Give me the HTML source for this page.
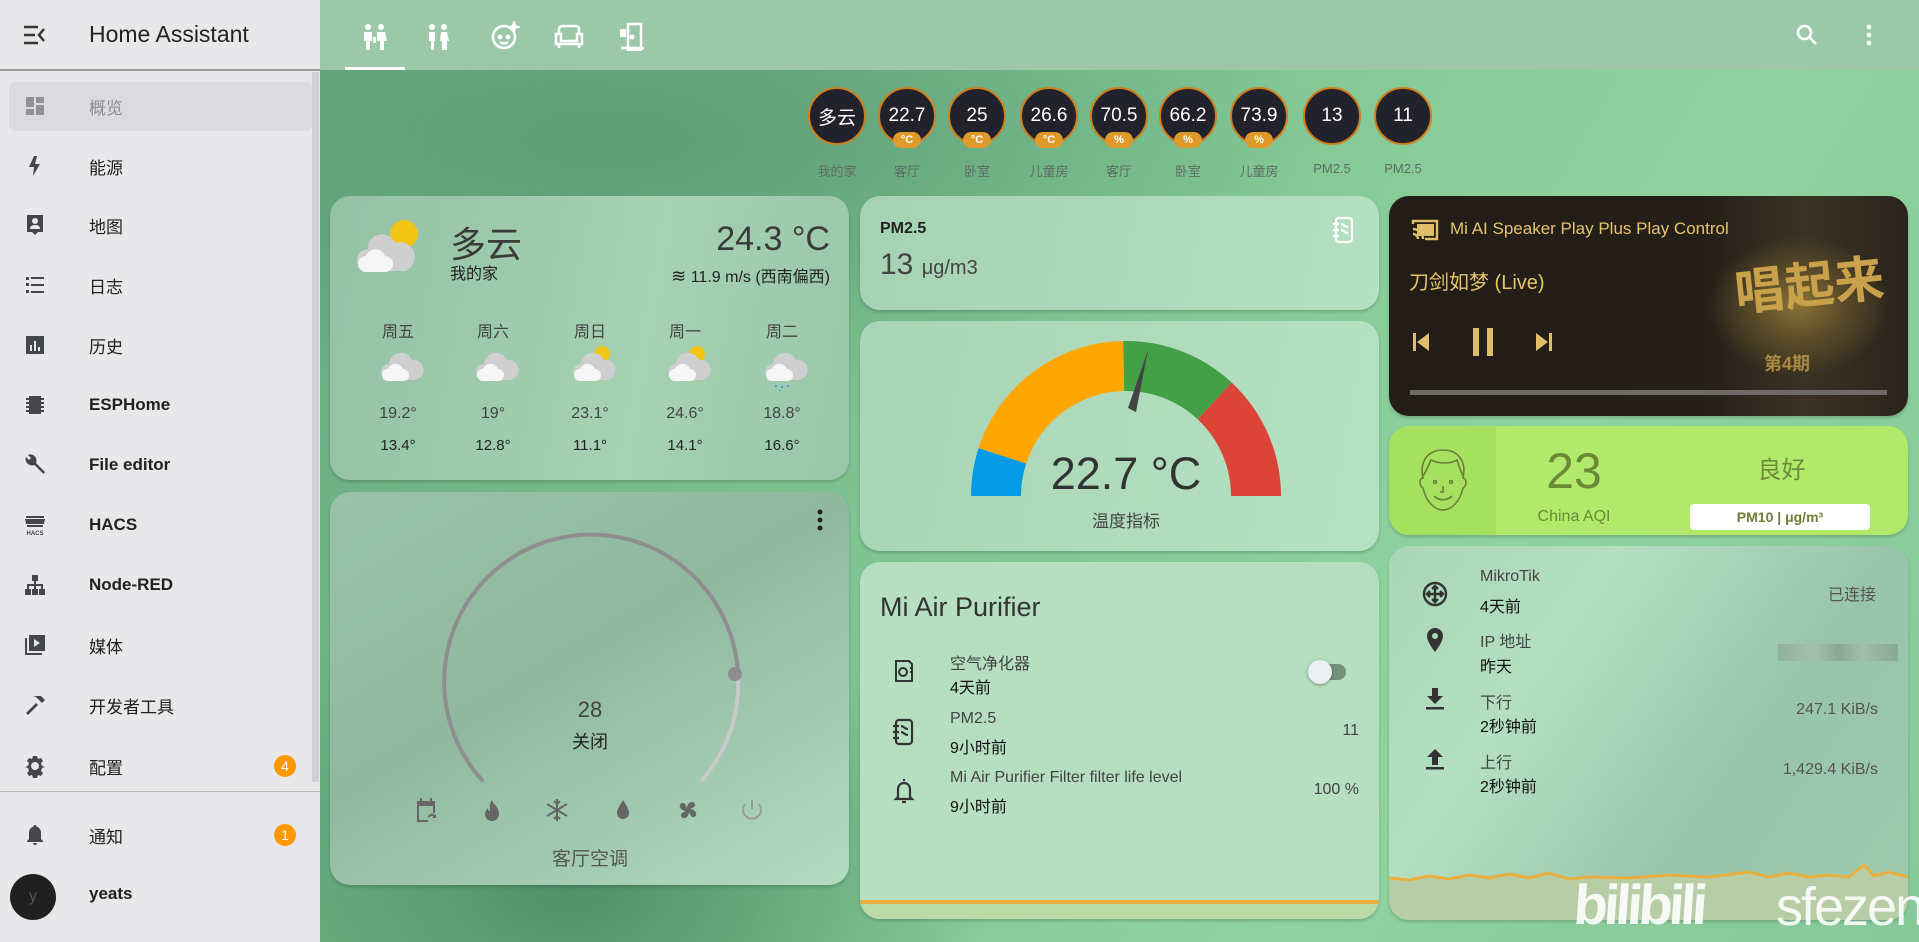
<!DOCTYPE html>
<html><head><meta charset="utf-8">
<style>
*{margin:0;padding:0;box-sizing:border-box}
body{width:1919px;height:942px;overflow:hidden;position:relative;font-family:"Liberation Sans","Noto Sans CJK SC",sans-serif;background:#7cbf8f}
.a{position:absolute}
#side{left:0;top:0;width:320px;height:942px;background:#e8e8eb}
.mi{position:absolute;left:0;width:312px;height:60px;display:flex;align-items:center;font-size:17px;color:#212121;font-weight:400}
.mi.en{font-weight:bold}
.mi svg{position:absolute;left:23px;width:24px;height:24px;fill:#44464d}
.mi span{position:absolute;left:89px}
#main{left:320px;top:0;width:1599px;height:942px;background:
radial-gradient(ellipse 420px 300px at 250px 880px,#4f9068 0%,rgba(79,144,104,0) 100%),
radial-gradient(ellipse 700px 260px at 300px 140px,#5e9e76 0%,rgba(94,158,118,0) 100%),
linear-gradient(120deg,#66a87e 0%,#7fc492 40%,#8fd3a0 70%,#86c898 100%);overflow:hidden}
#hdr{left:320px;top:0;width:1599px;height:70px;background:#9cc8aa}
.card{position:absolute;border-radius:20px;box-shadow:0 2px 3px rgba(0,0,0,.18);overflow:hidden}
.bd{position:absolute;width:58px;height:58px;border-radius:50%;background:#22222c;border:2px solid #d27d1c;color:#fff;font-size:19px;display:flex;align-items:center;justify-content:center}
.un{position:absolute;width:28px;height:16px;border-radius:8px;background:#e09a2b;color:#fff;font-size:11px;font-weight:bold;text-align:center;line-height:16px}
.bl{position:absolute;width:80px;text-align:center;font-size:13px;color:#5c6d62}
.t{position:absolute;white-space:nowrap}
.c{text-align:center}
</style></head><body>
<div id="main" class="a"></div>
<div id="hdr" class="a"></div>

<div id="side" class="a">
 <div class="a" style="left:0;top:69px;width:320px;height:2px;background:#9a9a9a"></div>
 <svg class="a" style="left:22px;top:24px" width="26" height="22" viewBox="0 0 26 22"><path d="M2 3h14M2 11h11M2 19h14" stroke="#333" stroke-width="2.4"/><path d="M22 5l-5 6 5 6" stroke="#333" stroke-width="2.4" fill="none"/></svg>
 <div class="t" style="left:89px;top:21px;font-size:23px;color:#222">Home Assistant</div>
 <div class="a" style="left:9px;top:82px;width:303px;height:49px;background:#dadadf;border-radius:6px"></div>
 <div class="a" style="left:312px;top:72px;width:7px;height:710px;background:#d0d0d4"></div>
 <div class="mi" style="top:76px;color:#8d8d90"><svg viewBox="0 0 24 24" style="fill:#909096"><path d="M3 3h8v10H3zM13 3h8v6h-8zM13 11h8v10h-8zM3 15h8v6H3z"/></svg><span>概览</span></div>
 <div class="mi" style="top:136px"><svg viewBox="0 0 24 24"><path d="M11 2L6 13h5l-1 9 7-12h-5l2-8z"/></svg><span>能源</span></div>
 <div class="mi" style="top:195px"><svg viewBox="0 0 24 24"><path d="M4 2h16v17h-5l-3 3-3-3H4zM12 5a3 3 0 100 6 3 3 0 000-6zM7 16h10c0-3-2-4-5-4s-5 1-5 4z"/></svg><span>地图</span></div>
 <div class="mi" style="top:255px"><svg viewBox="0 0 24 24"><path d="M3 4h3v3H3zM8 4h13v2H8zM3 10h3v3H3zM8 11h13v2H8zM3 17h3v3H3zM8 18h13v2H8z"/></svg><span>日志</span></div>
 <div class="mi" style="top:315px"><svg viewBox="0 0 24 24"><path d="M3 3h18v18H3zM7 12v6h2v-6zM11 8v10h2V8zM15 14v4h2v-4z" fill-rule="evenodd"/></svg><span>历史</span></div>
 <div class="mi en" style="top:375px"><svg viewBox="0 0 24 24"><path d="M6 3h12v18H6zM3 5h3v2H3zM3 9h3v2H3zM3 13h3v2H3zM3 17h3v2H3zM18 5h3v2h-3zM18 9h3v2h-3zM18 13h3v2h-3zM18 17h3v2h-3z"/></svg><span>ESPHome</span></div>
 <div class="mi en" style="top:435px"><svg viewBox="0 0 24 24"><path d="M22 19l-9-9c1-2 .5-5-1.5-7S6.5 1 5 2l3 3-2 2-3-3c-1 1.5-.5 4.5 1.5 6.5s5 2.5 7 1.5l9 9z"/></svg><span>File editor</span></div>
 <div class="mi en" style="top:495px"><svg viewBox="0 0 24 24"><path d="M3 3h18v2H3zM2 6h20l-1 5H3zM4 12h16v2H4z"/><text x="12" y="22" font-size="6" text-anchor="middle" fill="#44464d" font-weight="bold">HACS</text></svg><span>HACS</span></div>
 <div class="mi en" style="top:555px"><svg viewBox="0 0 24 24"><path d="M9 2h6v6h-2v3h7v5h2v6h-6v-6h2v-3h-5v3h2v6H9v-6h2v-3H6v3h2v6H2v-6h2v-5h7V8H9z"/></svg><span>Node-RED</span></div>
 <div class="mi" style="top:615px"><svg viewBox="0 0 24 24"><path d="M2 5h2v15h15v2H2zM6 2h16v16H6zM11 6v8l6-4z" fill-rule="evenodd"/></svg><span>媒体</span></div>
 <div class="mi" style="top:675px"><svg viewBox="0 0 24 24"><path d="M3 20l10-10 2 2L5 22zM10 3l8 0 4 4-3 3-6-6z"/></svg><span>开发者工具</span></div>
 <div class="mi" style="top:736px"><svg viewBox="0 0 24 24"><path d="M12 8a4 4 0 100 8 4 4 0 000-8zM10 2h4l1 3 3-1 2 3-2 2 1 3 3 1v0l-3 1-1 3 2 2-2 3-3-1-1 3h-4l-1-3-3 1-2-3 2-2-1-3-3-1 3-1 1-3-2-2 2-3 3 1z" fill-rule="evenodd"/></svg><span>配置</span></div>
 <div class="a" style="left:274px;top:755px;width:22px;height:22px;border-radius:50%;background:#ff9800;color:#fff;font-size:14px;text-align:center;line-height:22px">4</div>
 <div class="a" style="left:0;top:791px;width:320px;height:1px;background:#bbb"></div>
 <div class="mi" style="top:805px"><svg viewBox="0 0 24 24"><path d="M12 2c1 0 1.5.7 1.5 1.5C16.5 4.5 18 7 18 10v6l2 2v1H4v-1l2-2v-6c0-3 1.5-5.5 4.5-6.5C10.5 2.7 11 2 12 2zM10 20h4a2 2 0 01-4 0z"/></svg><span>通知</span></div>
 <div class="a" style="left:274px;top:824px;width:22px;height:22px;border-radius:50%;background:#ff9800;color:#fff;font-size:14px;text-align:center;line-height:22px">1</div>
 <div class="a" style="left:10px;top:874px;width:46px;height:46px;border-radius:50%;background:#202020;color:#555;font-size:16px;text-align:center;line-height:46px">y</div>
 <div class="t" style="left:89px;top:884px;font-size:17px;font-weight:bold;color:#212121">yeats</div>
</div>

<svg class="a" style="left:360px;top:23px" width="30" height="28" viewBox="0 0 30 28" fill="#fff"><circle cx="8" cy="4" r="3"/><circle cx="21" cy="4" r="3"/><path d="M4 9h8v9h-2v9H6v-9H4zM17 9h8l2 9h-3v9h-4v-9h-3zM13 14h3v6h-3z"/></svg>
<svg class="a" style="left:426px;top:23px" width="24" height="28" viewBox="0 0 24 28" fill="#fff"><circle cx="6" cy="4" r="3"/><circle cx="18" cy="4" r="3"/><path d="M3 9h6v9H8v9H5v-9H3zM15 9h6l2 9h-2v9h-5v-9h-2z"/></svg>
<svg class="a" style="left:490px;top:21px" width="30" height="30" viewBox="0 0 30 30" fill="none" stroke="#fff" stroke-width="2.5"><circle cx="14" cy="16" r="11"/><circle cx="10" cy="16" r="1.2" fill="#fff"/><circle cx="18" cy="16" r="1.2" fill="#fff"/><path d="M10 21c2 2 6 2 8 0M24 2l1 3 3 1-3 1-1 3-1-3-3-1 3-1z"/></svg>
<svg class="a" style="left:553px;top:24px" width="32" height="26" viewBox="0 0 32 26" fill="none" stroke="#fff" stroke-width="2.5"><path d="M6 10V5c0-2 2-3 4-3h12c2 0 4 1 4 3v5M3 10h5v7h16v-7h5v10H3zM6 20v4M26 20v4"/></svg>
<svg class="a" style="left:618px;top:21px" width="26" height="30" viewBox="0 0 26 30" fill="none" stroke="#fff" stroke-width="2.5"><path d="M10 3h13v26H10zM3 27h24"/><rect x="2" y="8" width="6" height="8" fill="#fff" stroke="none"/><circle cx="14" cy="16" r="1.3" fill="#fff"/></svg>
<div class="a" style="left:345px;top:67px;width:60px;height:3px;background:#fff"></div>
<svg class="a" style="left:1795px;top:23px" width="24" height="24" viewBox="0 0 24 24" fill="none" stroke="#fff" stroke-width="2.6"><circle cx="9.5" cy="9.5" r="6.5"/><path d="M14 14l7 7"/></svg>
<svg class="a" style="left:1862px;top:23px" width="14" height="24" viewBox="0 0 14 24" fill="#fff"><circle cx="7" cy="4" r="2.4"/><circle cx="7" cy="12" r="2.4"/><circle cx="7" cy="20" r="2.4"/></svg>

<div class="bd" style="left:808px;top:87px">多云</div>
<div class="bd" style="left:878px;top:87px">22.7</div><div class="un" style="left:893px;top:132px">°C</div>
<div class="bd" style="left:948px;top:87px">25</div><div class="un" style="left:963px;top:132px">°C</div>
<div class="bd" style="left:1020px;top:87px">26.6</div><div class="un" style="left:1035px;top:132px">°C</div>
<div class="bd" style="left:1090px;top:87px">70.5</div><div class="un" style="left:1105px;top:132px">%</div>
<div class="bd" style="left:1159px;top:87px">66.2</div><div class="un" style="left:1174px;top:132px">%</div>
<div class="bd" style="left:1230px;top:87px">73.9</div><div class="un" style="left:1245px;top:132px">%</div>
<div class="bd" style="left:1303px;top:87px">13</div>
<div class="bd" style="left:1374px;top:87px">11</div>
<div class="bl" style="left:797px;top:161px">我的家</div>
<div class="bl" style="left:867px;top:161px">客厅</div>
<div class="bl" style="left:937px;top:161px">卧室</div>
<div class="bl" style="left:1009px;top:161px">儿童房</div>
<div class="bl" style="left:1079px;top:161px">客厅</div>
<div class="bl" style="left:1148px;top:161px">卧室</div>
<div class="bl" style="left:1219px;top:161px">儿童房</div>
<div class="bl" style="left:1292px;top:161px">PM2.5</div>
<div class="bl" style="left:1363px;top:161px">PM2.5</div>

<div class="card" style="left:330px;top:196px;width:519px;height:284px;background:linear-gradient(100deg,#93c1a4,#a6d1b3 60%,#99c6a9)">
 <svg class="a" style="left:26px;top:20px" width="70" height="60" viewBox="0 0 70 60"><circle cx="48" cy="18" r="14" fill="#f2c413"/><path d="M12 55a11 11 0 010-22 14 14 0 0127-6 12 12 0 0110 28z" fill="#cfcfcf"/><path d="M10 56a8 8 0 010-16 10 10 0 0119 0 8 8 0 010 16z" fill="#f6f6f6"/></svg>
 <div class="t" style="left:120px;top:20px;font-size:36px;color:#3a3a3a">多云</div>
 <div class="t" style="left:120px;top:64px;font-size:16px;color:#222">我的家</div>
 <div class="t" style="right:19px;top:24px;font-size:34px;color:#3a3a3a">24.3 °C</div>
 <div class="t" style="right:19px;top:67px;font-size:16px;color:#222"><span style="font-size:18px">≋</span> 11.9 m/s (西南偏西)</div>
 <div class="t c" style="left:38px;width:60px;top:122px;font-size:16px;color:#444">周五</div>
 <div class="t c" style="left:133px;width:60px;top:122px;font-size:16px;color:#444">周六</div>
 <div class="t c" style="left:230px;width:60px;top:122px;font-size:16px;color:#444">周日</div>
 <div class="t c" style="left:325px;width:60px;top:122px;font-size:16px;color:#444">周一</div>
 <div class="t c" style="left:422px;width:60px;top:122px;font-size:16px;color:#444">周二</div>
 <svg class="a" style="left:50px;top:150px" width="44" height="40" viewBox="0 0 44 40"><path d="M9 34a8 8 0 010-16 12 12 0 0123-4 10 10 0 013 20z" fill="#cfcfcf"/><path d="M8 35a6 6 0 010-12 8 8 0 0115 0 6 6 0 010 12z" fill="#f6f6f6"/></svg>
 <svg class="a" style="left:145px;top:150px" width="44" height="40" viewBox="0 0 44 40"><path d="M9 34a8 8 0 010-16 12 12 0 0123-4 10 10 0 013 20z" fill="#cfcfcf"/><path d="M8 35a6 6 0 010-12 8 8 0 0115 0 6 6 0 010 12z" fill="#f6f6f6"/></svg>
 <svg class="a" style="left:242px;top:146px" width="44" height="44" viewBox="0 0 44 44"><circle cx="30" cy="12" r="8" fill="#f2c413"/><path d="M9 38a8 8 0 010-16 12 12 0 0123-4 10 10 0 013 20z" fill="#cfcfcf"/><path d="M8 39a6 6 0 010-12 8 8 0 0115 0 6 6 0 010 12z" fill="#f6f6f6"/></svg>
 <svg class="a" style="left:337px;top:146px" width="44" height="44" viewBox="0 0 44 44"><circle cx="30" cy="12" r="8" fill="#f2c413"/><path d="M9 38a8 8 0 010-16 12 12 0 0123-4 10 10 0 013 20z" fill="#cfcfcf"/><path d="M8 39a6 6 0 010-12 8 8 0 0115 0 6 6 0 010 12z" fill="#f6f6f6"/></svg>
 <svg class="a" style="left:434px;top:150px" width="44" height="46" viewBox="0 0 44 46"><path d="M9 34a8 8 0 010-16 12 12 0 0123-4 10 10 0 013 20z" fill="#cfcfcf"/><path d="M8 35a6 6 0 010-12 8 8 0 0115 0 6 6 0 010 12z" fill="#f6f6f6"/><path d="M12 39v2M18 40v2M24 39v2M16 44v1" stroke="#3aa0e8" stroke-width="2"/></svg>
 <div class="t c" style="left:38px;width:60px;top:209px;font-size:16px;color:#444">19.2°</div>
 <div class="t c" style="left:133px;width:60px;top:209px;font-size:16px;color:#444">19°</div>
 <div class="t c" style="left:230px;width:60px;top:209px;font-size:16px;color:#444">23.1°</div>
 <div class="t c" style="left:325px;width:60px;top:209px;font-size:16px;color:#444">24.6°</div>
 <div class="t c" style="left:422px;width:60px;top:209px;font-size:16px;color:#444">18.8°</div>
 <div class="t c" style="left:38px;width:60px;top:241px;font-size:15px;color:#222">13.4°</div>
 <div class="t c" style="left:133px;width:60px;top:241px;font-size:15px;color:#222">12.8°</div>
 <div class="t c" style="left:230px;width:60px;top:241px;font-size:15px;color:#222">11.1°</div>
 <div class="t c" style="left:325px;width:60px;top:241px;font-size:15px;color:#222">14.1°</div>
 <div class="t c" style="left:422px;width:60px;top:241px;font-size:15px;color:#222">16.6°</div>
</div>

<div class="card" style="left:330px;top:492px;width:519px;height:393px;background:linear-gradient(150deg,#98c2a8 0%,#90b9a0 45%,#b2dcc0 100%)">
 <svg class="a" style="left:0;top:0" width="519" height="393" viewBox="0 0 519 393">
  <path d="M152 288 A147 147 0 1 1 408 182" fill="none" stroke="#8e8e8e" stroke-width="4" stroke-linecap="round"/>
  <path d="M408 182 A147 147 0 0 1 372 288" fill="none" stroke="#c9c9c9" stroke-width="4" stroke-linecap="round"/>
  <circle cx="405" cy="182" r="7" fill="#8e8e8e"/>
  <circle cx="490" cy="20" r="2.5" fill="#222"/><circle cx="490" cy="28" r="2.5" fill="#222"/><circle cx="490" cy="36" r="2.5" fill="#222"/>
 </svg>
 <div class="t c" style="left:210px;width:100px;top:205px;font-size:22px;color:#444">28</div>
 <div class="t c" style="left:210px;width:100px;top:236px;font-size:18px;color:#222">关闭</div>
 <svg class="a" style="left:84px;top:305px" width="360" height="28" viewBox="0 0 360 28" fill="#666">
  <path d="M3 4h18v12h-2V9H5v14h9v2H3zM6 1h2v4H6zM16 1h2v4h-2z"/><path d="M14 20a4 4 0 017-2l1-1v4h-4l1.5-1.5a2.5 2.5 0 00-4 1z"/>
  <path d="M78 3c1 4 7 7 7 14a7 7 0 01-14 0c0-3 2-5 3-6 0 2 1 3 2 3 0-5-1-7 2-11z"/>
  <path d="M143 2v22M133 7l20 12M133 19l20-12M140 4l3 3 3-3M140 22l3-3 3 3" stroke="#666" stroke-width="2" fill="none"/>
  <path d="M209 3c-3 5-6 9-6 13a6 6 0 0012 0c0-4-3-8-6-13z"/>
  <path d="M273 11c0-5 6-9 8-4 1 3-3 4-5 5 5 0 9 6 4 8-3 1-4-3-5-5 0 5-6 9-8 4-1-3 3-4 5-5-5 0-9-6-4-8 3-1 4 3 5 5z"/>
  <path d="M338 3v9M331 7a9 9 0 1014 0" stroke="#9a9a9a" stroke-width="2" fill="none"/>
 </svg>
 <div class="t c" style="left:160px;width:200px;top:352px;font-size:19px;color:#555">客厅空调</div>
</div>

<div class="card" style="left:860px;top:196px;width:519px;height:114px;background:linear-gradient(100deg,#a5d2b3,#b5e0c2)">
 <div class="t" style="left:20px;top:24px;font-size:16px;font-weight:bold;color:#222">PM2.5</div>
 <div class="t" style="left:20px;top:52px;font-size:30px;color:#444">13 <span style="font-size:20px">μg/m3</span></div>
 <svg class="a" style="left:472px;top:20px" width="22" height="28" viewBox="0 0 22 28" fill="none" stroke="#fff" stroke-width="2.2"><rect x="4" y="2" width="16" height="24" rx="3"/><path d="M1 8h6M1 14h6M1 20h6M9 8c3 0 3 3 7 3M9 14c3 0 3 3 7 3"/></svg>
</div>

<div class="card" style="left:860px;top:321px;width:519px;height:230px;background:linear-gradient(100deg,#a8d5b5,#b6e1c2)">
 <svg class="a" style="left:0;top:0" width="519" height="230" viewBox="0 0 519 230">
  <g transform="translate(266,175)">
   <path d="M-155 0 A155 155 0 0 1 -147.4 -47.9 L-99.9 -32.4 A105 105 0 0 0 -105 0Z" fill="#039be5"/>
   <path d="M-147.4 -47.9 A155 155 0 0 1 -2.7 -155 L-1.8 -105 A105 105 0 0 0 -99.9 -32.4Z" fill="#ffa600"/>
   <path d="M-2.7 -155 A155 155 0 0 1 105.7 -113.4 L71.6 -76.8 A105 105 0 0 0 -1.8 -105Z" fill="#43a047"/>
   <path d="M105.7 -113.4 A155 155 0 0 1 155 0 L105 0 A105 105 0 0 0 71.6 -76.8Z" fill="#db4437"/>
   <path d="M22 -146 L10 -84 L2 -88 Z" fill="#444"/>
  </g>
 </svg>
 <div class="t c" style="left:166px;width:200px;top:127px;font-size:45px;color:#333">22.7 °C</div>
 <div class="t c" style="left:166px;width:200px;top:186px;font-size:17px;color:#444">温度指标</div>
</div>

<div class="card" style="left:860px;top:562px;width:519px;height:357px;background:#b5dfc0">
 <div class="t" style="left:20px;top:30px;font-size:27px;color:#333">Mi Air Purifier</div>
 <svg class="a" style="left:32px;top:96px" width="24" height="26" viewBox="0 0 24 26" fill="none" stroke="#333" stroke-width="2"><path d="M4 3h13l3 3v17H4z"/><circle cx="11" cy="14" r="4"/><path d="M18 10h3M18 14h3"/></svg>
 <div class="t" style="left:90px;top:88px;font-size:16px;color:#444">空气净化器</div>
 <div class="t" style="left:90px;top:112px;font-size:16px;color:#111">4天前</div>
 <div class="a" style="left:452px;top:102px;width:34px;height:16px;border-radius:8px;background:#72907a"></div>
 <div class="a" style="left:448px;top:98px;width:24px;height:24px;border-radius:50%;background:#eceef0;box-shadow:0 1px 3px rgba(0,0,0,.35)"></div>
 <svg class="a" style="left:32px;top:156px" width="22" height="28" viewBox="0 0 22 28" fill="none" stroke="#333" stroke-width="2.2"><rect x="4" y="2" width="16" height="24" rx="3"/><path d="M1 8h6M1 14h6M1 20h6M9 8c3 0 3 3 7 3M9 14c3 0 3 3 7 3"/></svg>
 <div class="t" style="left:90px;top:148px;font-size:16px;color:#444">PM2.5</div>
 <div class="t" style="left:90px;top:172px;font-size:16px;color:#111">9小时前</div>
 <div class="t" style="right:20px;top:160px;font-size:16px;color:#444">11</div>
 <svg class="a" style="left:32px;top:215px" width="24" height="28" viewBox="0 0 24 28" fill="none" stroke="#333" stroke-width="2.2"><path d="M12 2v2M6 20V12a6 6 0 0112 0v8l2 2H4zM10 25h4"/></svg>
 <div class="t" style="left:90px;top:207px;font-size:16px;color:#444">Mi Air Purifier Filter filter life level</div>
 <div class="t" style="left:90px;top:231px;font-size:16px;color:#111">9小时前</div>
 <div class="t" style="right:20px;top:219px;font-size:16px;color:#444">100 %</div>
 <div class="a" style="left:0;top:338px;width:519px;height:4px;background:#e8b040"></div>
 <div class="a" style="left:0;top:342px;width:519px;height:15px;background:#bcdaa8"></div>
</div>

<div class="card" style="left:1389px;top:196px;width:519px;height:220px;background:linear-gradient(90deg,#221d17 0%,#241f18 60%,#3a3224 80%,#2a241b 100%)">
 <div class="a" style="left:300px;top:20px;width:210px;height:180px;background:radial-gradient(ellipse 90px 70px at 110px 90px,#8a7236 0%,#5a4b28 50%,rgba(40,34,24,0) 100%)"></div>
 <div class="t" style="left:345px;top:50px;font-size:50px;font-weight:bold;color:#c9a14a;transform:rotate(-6deg)">唱起来</div>
 <div class="t" style="left:375px;top:154px;font-size:18px;font-weight:bold;color:#a88a40">第4期</div>
 <svg class="a" style="left:22px;top:22px" width="28" height="24" viewBox="0 0 28 24" fill="none" stroke="#e0bd68" stroke-width="2.4"><path d="M2 6V3h24v18H14"/><path d="M2 11a10 10 0 0110 10M2 16a5 5 0 015 5"/><rect x="6" y="6" width="17" height="12" fill="#e0bd68" stroke="none"/></svg>
 <div class="t" style="left:61px;top:23px;font-size:17px;color:#e6c46c">Mi AI Speaker Play Plus Play Control</div>
 <div class="t" style="left:20px;top:70px;font-size:20px;color:#e6c46c">刀剑如梦 (Live)</div>
 <svg class="a" style="left:24px;top:130px" width="150" height="32" viewBox="0 0 150 32" fill="#e0bd68"><path d="M0 7h3v18H0zM16 7v18L4 16z"/><path d="M60 2h6v28h-6zM74 2h6v28h-6z"/><path d="M123 7v18l12-9zM136 7h3v18h-3z"/></svg>
 <div class="a" style="left:21px;top:194px;width:477px;height:5px;background:#6e6a66"></div>
</div>

<div class="card" style="left:1389px;top:426px;width:519px;height:109px;background:#b1ea6a">
 <div class="a" style="left:0;top:0;width:107px;height:109px;background:#a6e05f"></div>
 <svg class="a" style="left:26px;top:20px" width="56" height="70" viewBox="0 0 56 70" fill="none" stroke="#6a7d3a" stroke-width="1.6"><path d="M8 32C4 14 14 4 28 4s24 10 20 28c4 0 4 8 0 10-3 14-12 22-20 22S11 56 8 42c-4-2-4-10 0-10z"/><path d="M8 30c4-6 6-12 8-16 8 4 20 4 26 0 2 6 4 12 6 16"/><circle cx="20" cy="36" r="1.5"/><circle cx="36" cy="36" r="1.5"/><path d="M28 40v6h-3M19 50c5 5 13 5 18 0"/></svg>
 <div class="t c" style="left:115px;width:140px;top:16px;font-size:50px;color:#6a8a33">23</div>
 <div class="t c" style="left:115px;width:140px;top:82px;font-size:16px;color:#6a8a33">China AQI</div>
 <div class="t c" style="left:300px;width:185px;top:24px;font-size:24px;color:#6d8a3a">良好</div>
 <div class="a" style="left:301px;top:78px;width:180px;height:26px;background:#fff;border-radius:4px;text-align:center;line-height:26px;font-size:14px;font-weight:bold;color:#6d7d36">PM10 | μg/m³</div>
</div>

<div class="card" style="left:1389px;top:546px;width:519px;height:374px;background:linear-gradient(125deg,#a9d6b6 0%,#b4dfc1 30%,#98c4ab 65%,#9dc9ad 100%)">
 <svg class="a" style="left:32px;top:34px" width="28" height="28" viewBox="0 0 28 28" fill="none" stroke="#333" stroke-width="2.4"><circle cx="14" cy="14" r="11"/><path d="M14 6v16M6 14h16M11 9l3-3 3 3M11 19l3 3 3-3M9 11l-3 3 3 3M19 11l3 3-3 3"/></svg>
 <div class="t" style="left:91px;top:22px;font-size:16px;color:#444">MikroTik</div>
 <div class="t" style="left:91px;top:47px;font-size:16px;color:#111">4天前</div>
 <div class="t" style="right:32px;top:35px;font-size:16px;color:#555">已连接</div>
 <svg class="a" style="left:34px;top:80px" width="24" height="32" viewBox="0 0 24 32" fill="#333"><path d="M12 2a8 8 0 018 8c0 6-8 16-8 16S4 16 4 10a8 8 0 018-8zm0 5a3 3 0 100 6 3 3 0 000-6z"/></svg>
 <div class="t" style="left:91px;top:82px;font-size:16px;color:#444">IP 地址</div>
 <div class="t" style="left:91px;top:107px;font-size:16px;color:#111">昨天</div>
 <div class="a" style="left:389px;top:98px;width:120px;height:17px;background:linear-gradient(90deg,#8fab9a,#a6c0ae 30%,#86a392 50%,#a2bcaa 70%,#86a392);opacity:.85"></div>
 <svg class="a" style="left:34px;top:140px" width="24" height="26" viewBox="0 0 24 26" fill="#333"><path d="M9 2h6v8h5l-8 8-8-8h5zM3 21h18v2.5H3z"/></svg>
 <div class="t" style="left:91px;top:143px;font-size:16px;color:#444">下行</div>
 <div class="t" style="left:91px;top:167px;font-size:16px;color:#111">2秒钟前</div>
 <div class="t" style="right:30px;top:155px;font-size:16px;color:#555">247.1 KiB/s</div>
 <svg class="a" style="left:34px;top:200px" width="24" height="26" viewBox="0 0 24 26" fill="#333"><path d="M9 19h6v-8h5l-8-8-8 8h5zM3 21h18v2.5H3z"/></svg>
 <div class="t" style="left:91px;top:203px;font-size:16px;color:#444">上行</div>
 <div class="t" style="left:91px;top:227px;font-size:16px;color:#111">2秒钟前</div>
 <div class="t" style="right:30px;top:215px;font-size:16px;color:#555">1,429.4 KiB/s</div>
 <svg class="a" style="left:0;top:318px" width="519" height="56" viewBox="0 0 519 56"><path d="M0 14 L20 16 40 12 60 15 80 11 100 14 120 10 140 14 160 9 180 15 200 13 240 14 280 11 320 13 360 8 380 13 400 9 420 13 440 11 460 13 475 1 485 12 500 8 519 13 L519 56 L0 56Z" fill="#b6cda6"/><path d="M0 14 L20 16 40 12 60 15 80 11 100 14 120 10 140 14 160 9 180 15 200 13 240 14 280 11 320 13 360 8 380 13 400 9 420 13 440 11 460 13 475 1 485 12 500 8 519 13" fill="none" stroke="#e8ae3e" stroke-width="3"/></svg>
</div>

<div class="t" style="left:1574px;top:872px;font-size:56px;font-weight:bold;color:rgba(255,255,255,.88);letter-spacing:-4px;transform:skewX(-4deg)">bilibili</div>
<div class="t" style="left:1776px;top:876px;font-size:54px;color:rgba(255,255,255,.88);letter-spacing:-2px">sfezen</div>
</body></html>
